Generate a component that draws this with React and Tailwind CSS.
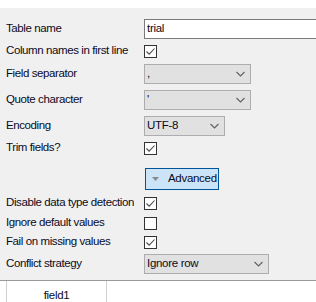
import React from 'react';

const font = { fontFamily: '"Liberation Sans", Arial, sans-serif' };

const Check = ({ checked }) => (
  <div className="w-[13px] h-[13px] bg-white border border-[#333333] flex items-center justify-center">
    {checked && (
      <svg width="11" height="11" viewBox="0 0 11 11">
        <path d="M1.5 5.5 L4.2 8.2 L9.5 2.5" fill="none" stroke="#4a4a4a" strokeWidth="1.1" />
      </svg>
    )}
  </div>
);

const Select = ({ value, w }) => (
  <div className={`h-5 ${w} bg-[#e1e1e1] border border-[#adadad] flex items-center justify-between pl-[2px] pr-[5px]`}>
    <span className="text-[11.5px] tracking-[-0.3px] text-[#0a0a1e] leading-none">{value}</span>
    <svg width="9" height="6" viewBox="0 0 9 6">
      <path d="M0.5 1 L4.5 5 L8.5 1" fill="none" stroke="#606060" strokeWidth="1.1" />
    </svg>
  </div>
);

const Row = ({ label, h = 'h-5', mt = 'mt-0', children }) => (
  <div className={`flex items-center ${h} ${mt}`}>
    <div className="w-[138px] whitespace-nowrap text-[11.5px] tracking-[-0.4px] text-[#0a0a1e] leading-none">{label}</div>
    {children}
  </div>
);

export default function App() {
  return (
    <div className="w-[316px] h-[302px] bg-white overflow-hidden" style={font}>
      <div className="mt-2 bg-[#f0f0f0] border-b border-[#9a9a9a] pl-[6px] pt-[11px] h-[273px]">
        <Row label="Table name">
          <div className="flex-1 h-5 bg-white border border-[#7a7a7a] border-r-0 flex items-center pl-[2px] text-[11.5px] tracking-[-0.3px] text-[#0a0a1e]">trial</div>
        </Row>
        <Row label="Column names in first line" mt="mt-[2px]">
          <Check checked />
        </Row>
        <Row label="Field separator" mt="mt-[3px]">
          <Select value="," w="w-[107px]" />
        </Row>
        <Row label="Quote character" mt="mt-[6px]">
          <Select value="'" w="w-[107px]" />
        </Row>
        <Row label="Encoding" mt="mt-[6px]">
          <Select value="UTF-8" w="w-[81px]" />
        </Row>
        <Row label="Trim fields?" mt="mt-[2px]">
          <Check checked />
        </Row>
        <div className="flex mt-[10px] h-[22px]">
          <div className="w-[139px]" />
          <div className="w-[74px] h-[22px] bg-[#cce4f7] border border-[#005499] flex items-center pl-[6px] gap-[9px] text-[11.5px] tracking-[-0.3px] text-[#0a0a1e]">
            <svg width="7" height="4" viewBox="0 0 7 4">
              <path d="M0 0 L7 0 L3.5 4 Z" fill="#8a8a8a" />
            </svg>
            <span>Advanced</span>
          </div>
        </div>
        <Row label="Disable data type detection" mt="mt-[3px]">
          <Check checked />
        </Row>
        <Row label="Ignore default values">
          <Check />
        </Row>
        <Row label="Fail on missing values" mt="mt-[-1px]">
          <Check checked />
        </Row>
        <Row label="Conflict strategy" mt="mt-[2px]">
          <Select value="Ignore row" w="w-[125px]" />
        </Row>
      </div>
      <div className="ml-[6px] flex h-[30px]">
        <div className="w-[101px] border-l border-r border-[#d0d0d0] flex justify-center pt-[6px] text-[11.5px] tracking-[-0.3px] text-[#0a0a1e]">field1</div>
      </div>
    </div>
  );
}
